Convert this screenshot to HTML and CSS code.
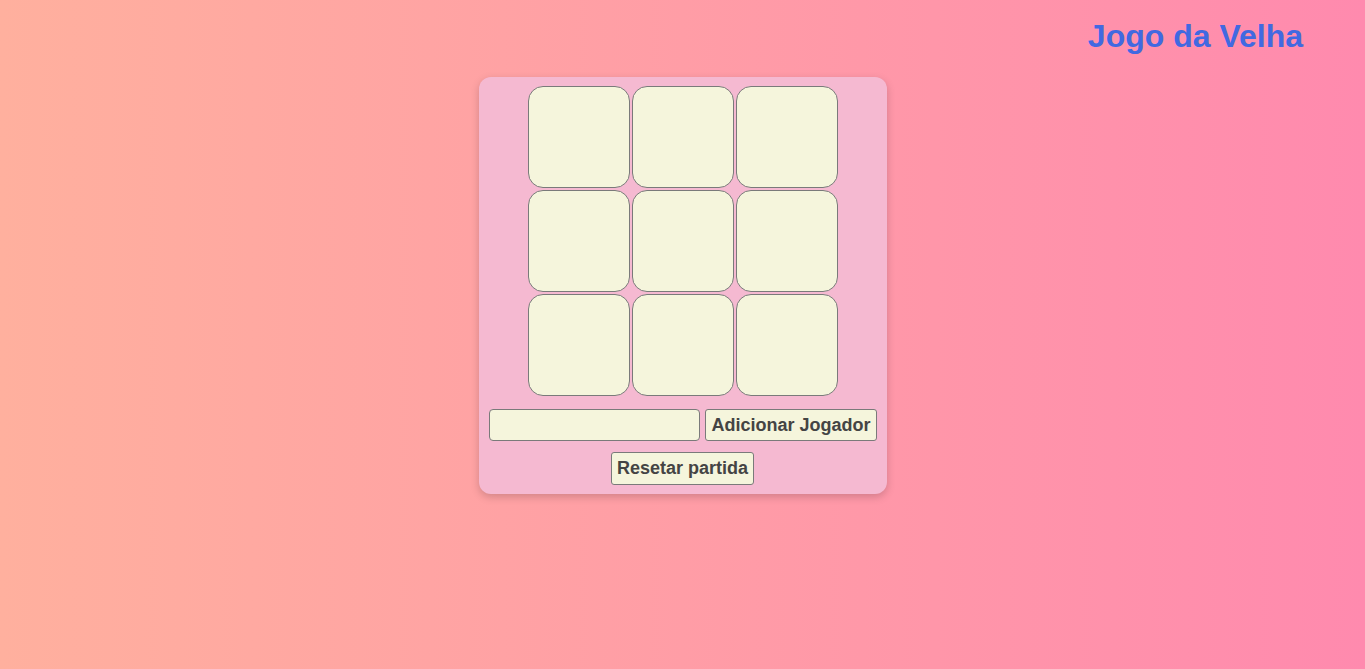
FILE: index.html
```html
<!DOCTYPE html>
<html lang="pt-BR">
<head>
<meta charset="utf-8">
<title>Jogo da Velha</title>
<link rel="stylesheet" href="styles.css">
</head>
<body>
<header class="header">
  <h1 class="title">Jogo da Velha</h1>
</header>
<main class="card">
  <div class="board">
    <div class="cell"></div><div class="cell"></div><div class="cell"></div>
    <div class="cell"></div><div class="cell"></div><div class="cell"></div>
    <div class="cell"></div><div class="cell"></div><div class="cell"></div>
  </div>
  <div class="player-row">
    <input class="player-input" type="text">
    <button class="btn">Adicionar Jogador</button>
  </div>
  <div class="reset-row">
    <button class="btn">Resetar partida</button>
  </div>
</main>
</body>
</html>
```
FILE: styles.css
```css
html, body {
  margin: 0;
  height: 100%;
}
body {
  font-family: "Liberation Sans", Arial, sans-serif;
  background: linear-gradient(to right, #ffb09e, #ff8aae);
}
.header {
  display: flex;
  justify-content: flex-end;
  padding: 18px 62px 0 0;
}
.title {
  margin: 0;
  font-size: 32px;
  font-weight: bold;
  color: #4169e1;
  line-height: 37px;
}
.card {
  width: 388px;
  margin: 22px auto 0;
  padding: 9px 10px;
  background: #f5b9d1;
  border-radius: 12px;
  box-shadow: 0 3px 8px rgba(0, 0, 0, 0.18);
  display: flex;
  flex-direction: column;
  align-items: center;
}
.board {
  display: grid;
  grid-template-columns: repeat(3, 102px);
  grid-template-rows: repeat(3, 102px);
  gap: 2px;
}
.cell {
  box-sizing: border-box;
  background: #f5f5dc;
  border: 1px solid #7a7a7a;
  border-radius: 15px;
}
.player-row {
  display: flex;
  gap: 5px;
  margin-top: 13px;
  width: 100%;
}
.player-input {
  box-sizing: border-box;
  flex: 1;
  min-width: 0;
  height: 32px;
  margin: 0;
  background: #f5f5dc;
  border: 1px solid #7a7a7a;
  border-radius: 4px;
}
.btn {
  box-sizing: border-box;
  height: 33px;
  margin: 0;
  padding: 0 5px;
  white-space: nowrap;
  font-family: "Liberation Sans", Arial, sans-serif;
  font-size: 18px;
  font-weight: bold;
  color: #444;
  background: #f5f5dc;
  border: 1px solid #7a7a7a;
  border-radius: 3px;
}
.player-row .btn {
  height: 32px;
}
.reset-row {
  margin-top: 11px;
  display: flex;
  justify-content: center;
}
```
